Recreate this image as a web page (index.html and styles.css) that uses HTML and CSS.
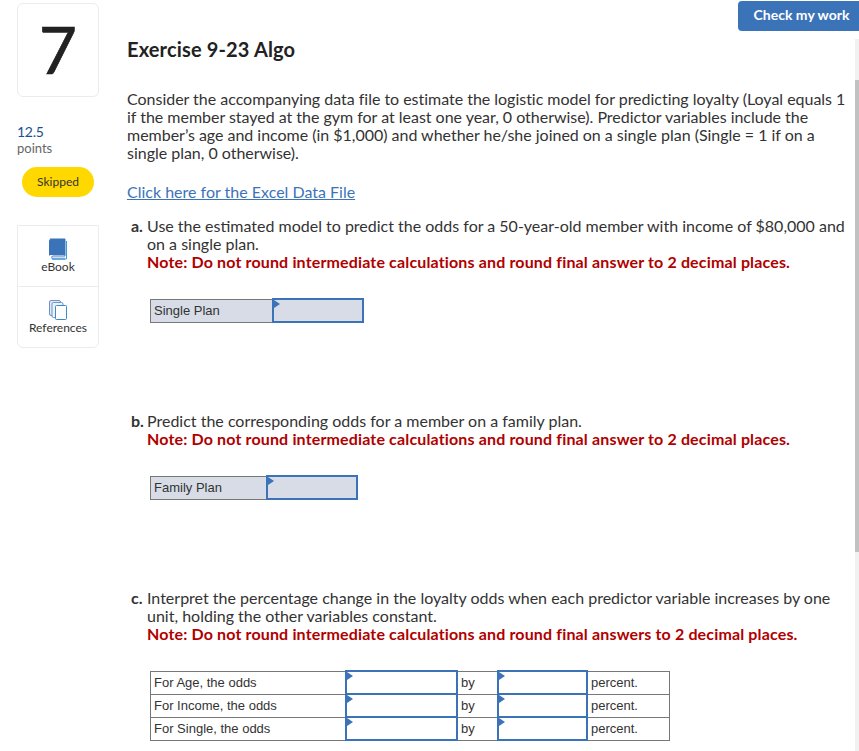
FILE: index.html
```html
<!DOCTYPE html>
<html lang="en">
<head>
  <meta charset="UTF-8" />
  <title>Exercise 9-23 Algo</title>
  <link rel="stylesheet" href="styles.css">
</head>
<body>
  <button class="check-btn">Check my work</button>
  <div class="scroll-track"><div class="scroll-thumb"></div></div>

  <div class="page">
    <aside class="side">
      <div class="number-box">7</div>
      <div class="points">
        <div class="points-value">12.5</div>
        <div class="points-label">points</div>
      </div>
      <div class="status">Skipped</div>
      <div class="tools">
        <div class="tool">
          <svg width="20" height="22" viewBox="0 0 20 22">
            <path d="M2 1h15v17H4.500a2 2 0 0 0 0 3H17" fill="none" stroke="#3b73b9" stroke-width="1"/>
            <path d="M1 3a2 2 0 0 1 2-2h14v16H3a2 2 0 0 0-2 1z" fill="#3b73b9"/>
            <path d="M18.500 3v18H4" fill="none" stroke="#3b9ae0" stroke-width="1"/>
            <path d="M3 19h14" stroke="#9dbbdd" stroke-width="1"/>
          </svg>
          <span>eBook</span>
        </div>
        <div class="tool">
          <svg width="20" height="22" viewBox="0 0 20 22">
            <rect x="1.500" y="1.500" width="11" height="15" rx="1.500" fill="#dfe8f4" stroke="#6d93c8"/>
            <rect x="4" y="3.500" width="11" height="15" rx="1.500" fill="#eef3fa" stroke="#6d93c8"/>
            <rect x="7.500" y="6.500" width="11" height="14" rx="1" fill="#fff" stroke="#3b8ad0"/>
          </svg>
          <span>References</span>
        </div>
      </div>
    </aside>

    <main class="content">
      <h1>Exercise 9-23 Algo</h1>
      <p class="intro">Consider the accompanying data file to estimate the logistic model for predicting loyalty (Loyal equals 1<br>if the member stayed at the gym for at least one year, 0 otherwise). Predictor variables include the<br>member’s age and income (in $1,000) and whether he/she joined on a single plan (Single = 1 if on a<br>single plan, 0 otherwise).</p>
      <p class="data-link"><a href="#">Click here for the Excel Data File</a></p>

      <div class="part part-a">
        <b class="part-letter">a.</b>
        <div>Use the estimated model to predict the odds for a 50-year-old member with income of $80,000 and<br>on a single plan.<br><strong class="note">Note: Do not round intermediate calculations and round final answer to 2 decimal places.</strong></div>
      </div>
      <table class="answer answer-single">
        <tr><td class="label shaded">Single Plan</td><td class="input shaded"></td></tr>
      </table>

      <div class="part part-b">
        <b class="part-letter">b.</b>
        <div>Predict the corresponding odds for a member on a family plan.<br><strong class="note">Note: Do not round intermediate calculations and round final answer to 2 decimal places.</strong></div>
      </div>
      <table class="answer answer-family">
        <tr><td class="label shaded">Family Plan</td><td class="input shaded"></td></tr>
      </table>

      <div class="part part-c">
        <b class="part-letter">c.</b>
        <div>Interpret the percentage change in the loyalty odds when each predictor variable increases by one<br>unit, holding the other variables constant.<br><strong class="note">Note: Do not round intermediate calculations and round final answers to 2 decimal places.</strong></div>
      </div>
      <table class="answer answer-odds">
        <tr><td class="label">For Age, the odds</td><td class="input wide"></td><td class="by">by</td><td class="input mid"></td><td class="pct">percent.</td></tr>
        <tr><td class="label">For Income, the odds</td><td class="input wide"></td><td class="by">by</td><td class="input mid"></td><td class="pct">percent.</td></tr>
        <tr><td class="label">For Single, the odds</td><td class="input wide"></td><td class="by">by</td><td class="input mid"></td><td class="pct">percent.</td></tr>
      </table>
    </main>
  </div>
</body>
</html>
```

FILE: styles.css
```css
html, body {
  height: 751px;
  overflow: hidden;
}
body {
  margin: 0;
  font-family: 'Lato', sans-serif;
  font-size: 16px;
  line-height: 18px;
  color: #333;
  background: #fff;
}
.check-btn {
  position: absolute;
  top: 1px;
  right: 0;
  width: 121px;
  height: 30px;
  padding: 0 0 4px 6px;
  border: none;
  border-radius: 4px 0 0 4px;
  background: #3b73b9;
  color: #fff;
  font-family: 'Lato', sans-serif;
  font-size: 14px;
  font-weight: 700;
}
.scroll-track {
  position: absolute;
  top: 39px;
  right: 0;
  width: 4px;
  height: 712px;
  background: #f1f1f1;
}
.scroll-thumb {
  margin-top: 41px;
  height: 472px;
  background: #c1c1c1;
}
.page {
  display: flex;
  padding: 3px 0 0 17px;
}
.side {
  width: 82px;
  flex-shrink: 0;
  margin-right: 28px;
}
.number-box {
  height: 92px;
  border: 1px solid #ececec;
  border-radius: 6px;
  font-size: 66px;
  line-height: 90px;
  text-align: center;
  color: #222;
  -webkit-text-stroke: 0.6px #222;
}
.points {
  margin-top: 26px;
}
.points-value {
  font-size: 14px;
  line-height: 18px;
  letter-spacing: -0.3px;
  color: #1c4f8f;
}
.points-label {
  font-size: 13px;
  line-height: 15px;
  color: #666;
}
.status {
  margin: 11px 5px 0;
  height: 30px;
  border-radius: 15px;
  background: #ffd800;
  font-size: 12px;
  line-height: 30px;
  text-align: center;
}
.tools {
  margin-top: 28px;
  border: 1px solid #ececec;
  border-radius: 0 0 6px 6px;
}
.tool {
  display: flex;
  flex-direction: column;
  align-items: center;
  height: 60px;
  padding-top: 12px;
  box-sizing: border-box;
  font-size: 12px;
  line-height: 14px;
}
.tool + .tool {
  border-top: 1px solid #ececec;
  height: 61px;
}
.content {
  flex: 1;
  min-width: 0;
}
h1 {
  margin: 34px 0 0;
  font-size: 20px;
  line-height: 24px;
  font-weight: 700;
  letter-spacing: 0.15px;
  color: #222;
}
.intro {
  margin: 29px 0 0;
  white-space: nowrap;
  letter-spacing: -0.02px;
}
.data-link {
  margin: 21px 0 0;
}
.data-link a {
  color: #3b73b9;
}
.part {
  display: flex;
  gap: 4px;
  margin-left: 4px;
  white-space: nowrap;
}
.part-letter {
  width: 12px;
}
.note {
  color: #b00000;
  font-weight: 700;
  letter-spacing: 0.15px;
}
.part-a {
  margin-top: 16px;
}
.part-b, .part-c {
  margin-top: 89px;
}
.answer {
  border-collapse: collapse;
  margin-left: 23px;
  font-family: 'Liberation Sans', sans-serif;
  font-size: 13px;
  line-height: 16px;
}
.answer-single, .answer-family {
  margin-top: 27px;
}
.answer-odds {
  margin-top: 27px;
  width: 520px;
}
.answer td {
  border: 1px solid #777;
  padding: 2px 3px;
  height: 17px;
}
.shaded {
  background: #d7dce6;
}
.answer .input {
  position: relative;
  border: 2px solid #3b73b9;
}
.input::before {
  content: "";
  position: absolute;
  top: 0;
  left: 0;
  border-left: 6px solid #3b73b9;
  border-top: 4px solid transparent;
  border-bottom: 4px solid transparent;
}
.answer-single .label { width: 115px; }
.answer-single .input { width: 82px; }
.answer-family .label { width: 109px; }
.answer-family .input { width: 82px; }
.answer-odds .label { width: 188px; }
.answer-odds .wide { width: 103px; }
.answer-odds .by { width: 33px; }
.answer-odds .mid { width: 81px; }
```
